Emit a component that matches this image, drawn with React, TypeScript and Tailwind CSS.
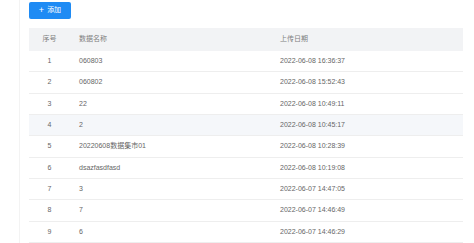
const rows = [
  { id: 1, name: "060803", date: "2022-06-08 16:36:37" },
  { id: 2, name: "060802", date: "2022-06-08 15:52:43" },
  { id: 3, name: "22", date: "2022-06-08 10:49:11" },
  { id: 4, name: "2", date: "2022-06-08 10:45:17" },
  { id: 5, name: "20220608数据集市01", date: "2022-06-08 10:28:39" },
  { id: 6, name: "dsazfasdfasd", date: "2022-06-08 10:19:08" },
  { id: 7, name: "3", date: "2022-06-07 14:47:05" },
  { id: 8, name: "7", date: "2022-06-07 14:46:49" },
  { id: 9, name: "6", date: "2022-06-07 14:46:29" },
]

export default function App() {
  return (
    <div
      className="h-[243px] w-[474px] overflow-hidden bg-white text-[7px] text-[#666666]"
      style={{ fontFamily: '"Liberation Sans", "Noto Sans CJK SC", sans-serif' }}
    >
      <div className="ml-[19px] h-full border-l border-[#f3f3f3] pl-[9px] pr-[11px]">
        <div className="pt-[2px]">
          <button className="flex h-[17px] w-[42px] items-center justify-center gap-[3px] rounded-[2px] bg-[#1f8bf4] text-[7px] text-white">
            <span className="text-[9px] font-light leading-none">+</span>
            <span>添加</span>
          </button>
        </div>
        <div className="mt-[9px]">
          <div className="flex h-[23px] items-center bg-[#f2f3f5] text-[#808080]">
            <div className="w-[41px] text-center">序号</div>
            <div className="w-[202px] pl-[9px]">数据名称</div>
            <div className="flex-1 pl-[8px]">上传日期</div>
          </div>
          {rows.map((r) => (
            <div
              key={r.id}
              className={`flex h-[21.33px] items-center border-b border-[#eeeeee] ${r.id === 4 ? "bg-[#f5f7fa]" : ""}`}
            >
              <div className="w-[41px] text-center">{r.id}</div>
              <div className="w-[202px] pl-[9px]">{r.name}</div>
              <div className="flex-1 pl-[8px]">{r.date}</div>
            </div>
          ))}
        </div>
      </div>
    </div>
  )
}
